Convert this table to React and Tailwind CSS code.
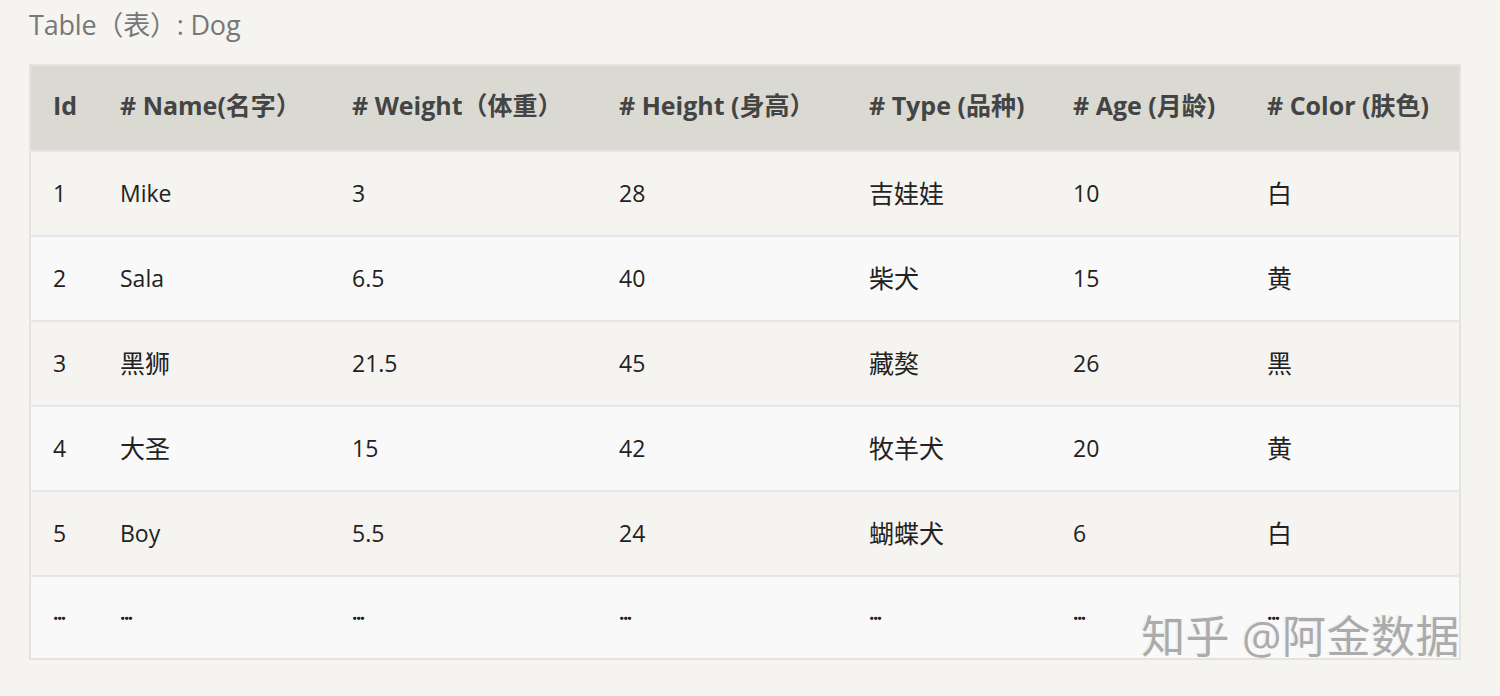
import React from 'react';

const headers = ['Id', '# Name(名字）', '# Weight（体重）', '# Height (身高）', '# Type (品种)', '# Age (月龄)', '# Color (肤色)'];

const rows = [
    ['1', 'Mike', '3', '28', '吉娃娃', '10', '白'],
    ['2', 'Sala', '6.5', '40', '柴犬', '15', '黄'],
    ['3', '黑狮', '21.5', '45', '藏獒', '26', '黑'],
    ['4', '大圣', '15', '42', '牧羊犬', '20', '黄'],
    ['5', 'Boy', '5.5', '24', '蝴蝶犬', '6', '白'],
    ['...', '...', '...', '...', '...', '...', '...'],
];

const widths = ['w-[68px]', 'w-[232px]', 'w-[267px]', 'w-[250px]', 'w-[204px]', 'w-[194px]', 'w-[215px]'];

// chinese cells render a bit larger in the screenshot
const isCjk = (s) => /[\u4e00-\u9fff]/.test(s);

const App = () => {
    return (
        <div
            className="min-h-screen bg-[#f5f4f1] pt-[8px] pl-[29px]"
            style={{ fontFamily: '"Open Sans", "Noto Sans CJK SC", sans-serif' }}
        >
            <h1 className="text-[27px] text-[#777] leading-[34px] tracking-[-0.2px]">Table（表）: Dog</h1>
            <div className="relative mt-[22px] w-[1431px]">
                <table className="w-full border-collapse border-2 border-[#e4e3df] table-fixed">
                    <thead className="bg-[#dadad3]">
                        <tr>
                            {headers.map((h, i) => (
                                <th
                                    key={h}
                                    className={`${widths[i]} h-[86px] pl-[22px] pb-[4px] text-left text-[25px] font-bold text-[#444] tracking-[0px] whitespace-nowrap`}
                                >
                                    {h}
                                </th>
                            ))}
                        </tr>
                    </thead>
                    <tbody>
                        {rows.map((row, r) => (
                            <tr
                                key={r}
                                className={`border-t-2 border-[#e6e6ea] ${r % 2 === 0 ? 'bg-[#f5f4f1]' : 'bg-[#f9f9f9]'}`}
                            >
                                {row.map((cell, c) => (
                                    <td
                                        key={c}
                                        className={`pl-[22px] text-[#222] whitespace-nowrap ${
                                            cell === '...'
                                                ? 'h-[83px] text-[19px] font-bold tracking-[-1.5px] pb-[8px]'
                                                : isCjk(cell)
                                                ? 'h-[85px] text-[25px]'
                                                : 'h-[85px] text-[23px]'
                                        }`}
                                    >
                                        {cell}
                                    </td>
                                ))}
                            </tr>
                        ))}
                    </tbody>
                </table>
                <span
                    className="absolute right-0 bottom-[2px] text-[44px] leading-none text-[#ababab] tracking-[0.5px] whitespace-nowrap"
                    style={{ textShadow: '-2px -1px 0 #f2f2f2' }}
                >
                    知乎 @阿金数据
                </span>
            </div>
        </div>
    );
};

export default App;
